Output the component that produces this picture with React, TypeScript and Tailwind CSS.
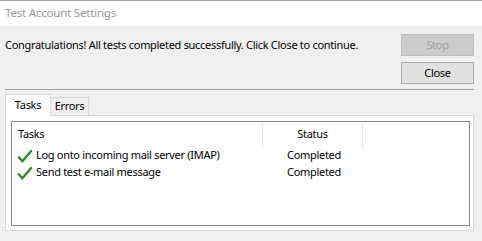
const tasks = [
  { name: "Log onto incoming mail server (IMAP)", status: "Completed" },
  { name: "Send test e-mail message", status: "Completed" },
];

function Check() {
  return (
    <svg width="16" height="14" viewBox="0 0 16 14" className="shrink-0">
      <path
        d="M1.2 7.6 L5.4 12.2 L14.8 1.2"
        fill="none"
        stroke="#2a8a2a"
        strokeWidth="2.3"
        strokeLinejoin="miter"
      />
    </svg>
  );
}

function WinButton({ label, disabled }: { label: string; disabled?: boolean }) {
  const cls = disabled
    ? "border-[#bfbfbf] bg-[#cccccc] text-[#a0a0a0]"
    : "border-[#adadad] bg-[#e1e1e1] text-black";
  return (
    <button
      type="button"
      className={`flex h-[22px] w-[73px] items-center justify-center border ${cls}`}
    >
      {label}
    </button>
  );
}

export default function App() {
  return (
    <div
      className="flex h-[241px] w-[482px] flex-col overflow-hidden bg-[#f0f0f0] text-[11px] tracking-[-0.3px] text-black"
      style={{ fontFamily: '"Noto Sans", "Segoe UI", sans-serif' }}
    >
      <div className="flex h-[26px] shrink-0 items-center border-t border-[#a0a0a0] bg-white px-[5px] pb-px text-[11.5px] tracking-[-0.2px] text-[#999999]">
        Test Account Settings
      </div>

      <div className="flex justify-between pl-[5px] pr-[8px] pt-[8px]">
        <p className="mt-[3px] whitespace-nowrap leading-[16px]">
          Congratulations! All tests completed successfully. Click Close to continue.
        </p>
        <div className="flex flex-col gap-[6px]">
          <WinButton label="Stop" disabled />
          <WinButton label="Close" />
        </div>
      </div>

      <div className="ml-[5px] mr-[8px] mt-[5px] h-px bg-[#a0a0a0]" />

      <div className="ml-[5px] mr-[8px] mt-[4px]">
        <div className="flex items-end">
          <div className="relative z-10 -mb-px flex h-[22px] w-[46px] items-center justify-center border border-b-0 border-[#d9d9d9] bg-white">
            Tasks
          </div>
          <div className="flex h-[18px] w-[38px] items-center justify-center border border-b-0 border-l-0 border-[#d9d9d9] bg-[#f0f0f0]">
            Errors
          </div>
        </div>
        <div className="h-[116px] border border-[#d9d9d9] bg-white pb-[4px] pl-[5px] pr-[3px] pt-[5px]">
          <div className="h-full border border-[#828790] bg-white">
            <div className="flex h-[25px] items-stretch">
              <div className="flex w-[251px] items-center border-r border-[#e5e5e5] pl-[6px]">
                Tasks
              </div>
              <div className="flex w-[100px] items-center justify-center border-r border-[#e5e5e5]">
                Status
              </div>
            </div>
            {tasks.map((t) => (
              <div key={t.name} className="flex h-[17px] items-center">
                <div className="flex w-[252px] items-center gap-[3px] pl-[5px]">
                  <Check />
                  <span>{t.name}</span>
                </div>
                <div className="w-[100px] text-center">{t.status}</div>
              </div>
            ))}
          </div>
        </div>
      </div>
    </div>
  );
}
